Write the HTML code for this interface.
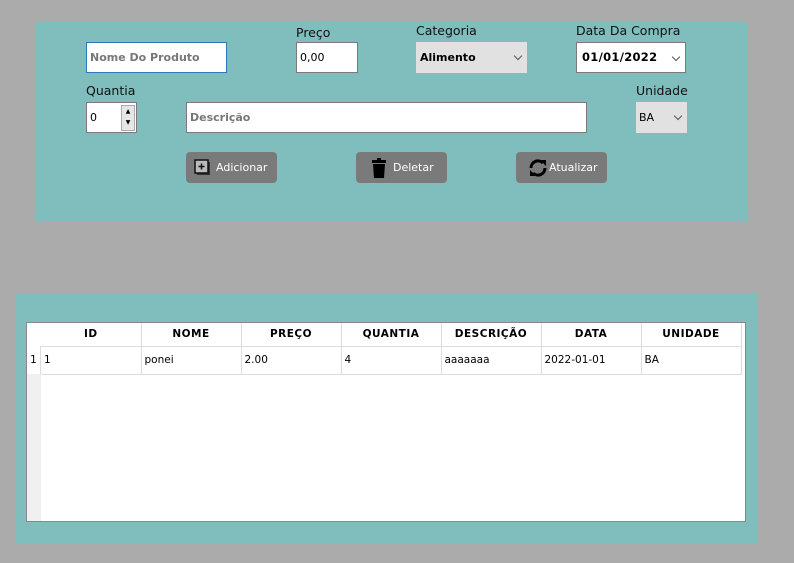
<!DOCTYPE html>
<html><head><meta charset="utf-8"><style>
body{margin:0;width:794px;height:563px;background:#ababab;font-family:"DejaVu Sans","Liberation Sans",sans-serif;position:relative;overflow:hidden}
.a{position:absolute}
.p{background:#80bdbd}
.lbl{font-size:12.5px;color:#111}
.in{background:#fff;border:1px solid #7a7a7a;box-sizing:border-box;font-size:11px;line-height:29px;padding-left:3px}
.btn{background:#7a7a7a;border-radius:4px;color:#fff;font-size:11px;box-sizing:border-box;display:flex;align-items:center}
.cb{background:#e1e1e1;font-size:11px;box-sizing:border-box}
.chev{position:absolute;right:6px;top:11px;width:5px;height:5px;border-right:1px solid #555;border-bottom:1px solid #555;transform:rotate(45deg)}
table{border-collapse:collapse;font-size:10.5px}
td,th{border-right:1px solid #ddd;border-bottom:1px solid #ddd;width:99px;padding:0 3px;box-sizing:border-box}
th{height:23px;font-weight:bold;text-align:center;letter-spacing:.5px}
td{height:28px}
</style></head><body>
<div class="a p" style="left:36px;top:22px;width:711px;height:200px"></div>
<div class="a in" style="left:86px;top:42px;width:141px;height:31px;border-color:#2a7ab8;color:#777;font-weight:bold;line-height:29px">Nome Do Produto</div>
<div class="a lbl" style="left:296px;top:25px">Preço</div>
<div class="a in" style="left:296px;top:42px;width:62px;height:31px">0,00</div>
<div class="a lbl" style="left:416px;top:23px">Categoria</div>
<div class="a cb" style="left:416px;top:42px;width:111px;height:31px;font-weight:bold;padding:0 4px;line-height:31px">Alimento<span class="chev"></span></div>
<div class="a lbl" style="left:576px;top:23px">Data Da Compra</div>
<div class="a in" style="left:576px;top:42px;width:110px;height:31px;font-weight:bold;font-size:11.5px;padding-left:5px;letter-spacing:.3px">01/01/2022<span class="chev"></span></div>
<div class="a lbl" style="left:86px;top:83px">Quantia</div>
<div class="a in" style="left:86px;top:102px;width:51px;height:31px">0
 <div class="a" style="left:34px;top:2px;width:12px;height:24px;background:#e6e6e6;border:1px solid #aaa;font-size:6px;line-height:11px;text-align:center">▲<br>▼</div></div>
<div class="a in" style="left:186px;top:102px;width:401px;height:31px;color:#777;font-weight:bold">Descrição</div>
<div class="a lbl" style="left:636px;top:83px">Unidade</div>
<div class="a cb" style="left:636px;top:102px;width:51px;height:31px;padding-left:3px;line-height:31px">BA<span class="chev"></span></div>
<div class="a btn" style="left:186px;top:152px;width:91px;height:31px;padding-left:8px"><svg width="18" height="18" viewBox="0 0 18 18"><rect x="3" y="3" width="13" height="13" fill="#333"/><rect x="1" y="1" width="13" height="13" fill="#bbb" stroke="#111" stroke-width="1.5"/><path d="M7.5 4.5v6M4.5 7.5h6" stroke="#111" stroke-width="1.5"/></svg><span style="margin-left:4px">Adicionar</span></div>
<div class="a btn" style="left:356px;top:152px;width:91px;height:31px;padding-left:15px"><svg width="16" height="20" viewBox="0 0 16 20"><rect x="1" y="2" width="14" height="3" fill="#000"/><rect x="6" y="0" width="4" height="3" fill="#000"/><path d="M2 6h12l-1 14H3z" fill="#000"/></svg><span style="margin-left:6px">Deletar</span></div>
<div class="a btn" style="left:516px;top:152px;width:91px;height:31px;padding-left:12px"><svg width="20" height="18" viewBox="0 0 20 18"><path d="M3 9a7 7 0 0 1 12-5" stroke="#000" stroke-width="3" fill="none"/><path d="M17 9a7 7 0 0 1-12 5" stroke="#000" stroke-width="3" fill="none"/><path d="M12 1l6 0 0 6z M8 17l-6 0 0-6z" fill="#000"/></svg><span style="margin-left:1px">Atualizar</span></div>

<div class="a p" style="left:16px;top:293px;width:741px;height:250px"></div>
<div class="a" style="left:26px;top:322px;width:720px;height:200px;background:#fff;border:1px solid #888;box-sizing:border-box"></div>
<div class="a" style="left:27px;top:374px;width:14px;height:147px;background:#f0f0f0"></div>
<div class="a" style="left:27px;top:346px;width:14px;height:28px;font-size:10.5px;line-height:28px;text-align:center;border-right:1px solid #ddd;box-sizing:border-box">1</div>
<table class="a" style="left:41px;top:323px">
<tr><th style="width:100px">ID</th><th style="width:100px">NOME</th><th style="width:100px">PREÇO</th><th style="width:100px">QUANTIA</th><th style="width:100px">DESCRIÇÃO</th><th style="width:100px">DATA</th><th style="width:100px">UNIDADE</th></tr>
<tr><td>1</td><td>ponei</td><td>2.00</td><td>4</td><td>aaaaaaa</td><td>2022-01-01</td><td>BA</td></tr>
</table>
</body></html>
